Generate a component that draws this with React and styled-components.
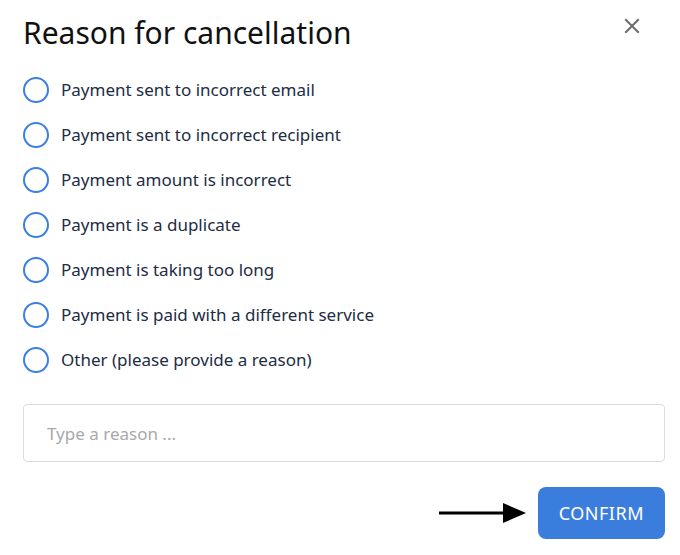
import React, { useState } from 'react';
import styled, { createGlobalStyle } from 'styled-components';

const GlobalStyle = createGlobalStyle`
    html, body {
        margin: 0;
        padding: 0;
        background: #fff;
    }
    body {
        font-family: "Noto Sans", "Open Sans", sans-serif;
    }
`;

const Dialog = styled.div`
    width: 680px;
    box-sizing: border-box;
    padding: 10px 15px 0 23px;
`;

const Header = styled.div`
    display: flex;
    align-items: center;
    justify-content: space-between;
    height: 44px;
`;

const Title = styled.h2`
    margin: 0;
    font-size: 30px;
    font-weight: 400;
    color: #111;
`;

const CloseButton = styled.button`
    width: 34px;
    height: 34px;
    margin-right: 16px;
    margin-top: -12px;
    padding: 0;
    border: none;
    background: transparent;
    display: flex;
    align-items: center;
    justify-content: center;
    cursor: pointer;
`;

const List = styled.div`
    display: flex;
    flex-direction: column;
    margin-top: 13px;
`;

const Option = styled.label`
    display: flex;
    align-items: center;
    gap: 12px;
    height: 45px;
    cursor: pointer;
    font-size: 17px;
    color: #222c44;
`;

const Radio = styled.span`
    width: 26px;
    height: 26px;
    box-sizing: border-box;
    border-radius: 50%;
    border: 2px solid #3b7ee6;
    display: flex;
    align-items: center;
    justify-content: center;

    &::after {
        content: '';
        width: 12px;
        height: 12px;
        border-radius: 50%;
        background: #3b7ee6;
        display: ${(p) => (p.checked ? 'block' : 'none')};
    }
`;

const ReasonInput = styled.input`
    display: block;
    width: 100%;
    height: 58px;
    box-sizing: border-box;
    margin-top: 22px;
    padding: 0 23px;
    border: 1px solid #dcdcdc;
    border-radius: 4px;
    font-family: inherit;
    font-size: 17px;
    color: #222c44;
    outline: none;

    &::placeholder {
        color: #a9a9a9;
    }
`;

const Footer = styled.div`
    display: flex;
    align-items: center;
    justify-content: flex-end;
    gap: 11px;
    margin-top: 25px;
`;

const Button = styled.button`
    height: 52px;
    padding: 0 21px;
    border: none;
    border-radius: 8px;
    background: #3a7ddc;
    color: #fff;
    font-family: inherit;
    font-size: 18px;
    letter-spacing: 0.5px;
    cursor: pointer;
`;

const reasons = [
    'Payment sent to incorrect email',
    'Payment sent to incorrect recipient',
    'Payment amount is incorrect',
    'Payment is a duplicate',
    'Payment is taking too long',
    'Payment is paid with a different service',
    'Other (please provide a reason)',
];

const App = () => {
    const [selected, setSelected] = useState(null);
    const [reason, setReason] = useState('');

    return (
        <Dialog>
            <GlobalStyle />
            <Header>
                <Title>Reason for cancellation</Title>
                <CloseButton aria-label="Close">
                    <svg width="16" height="16" viewBox="0 0 16 16">
                        <path d="M2 2L14 14M14 2L2 14" stroke="#6b6b6b" strokeWidth="2" strokeLinecap="square" />
                    </svg>
                </CloseButton>
            </Header>
            <List>
                {reasons.map((r, i) => (
                    <Option key={r} onClick={() => setSelected(i)}>
                        <Radio checked={selected === i} />
                        {r}
                    </Option>
                ))}
            </List>
            <ReasonInput
                placeholder="Type a reason ..."
                value={reason}
                onChange={(e) => setReason(e.target.value)}
            />
            <Footer>
                <svg width="88" height="24" viewBox="0 0 88 24">
                    <line x1="0" y1="12" x2="66" y2="12" stroke="#000" strokeWidth="3" />
                    <polygon points="64,2 87,12 64,22" fill="#000" />
                </svg>
                <Button>CONFIRM</Button>
            </Footer>
        </Dialog>
    );
};

export default App;
